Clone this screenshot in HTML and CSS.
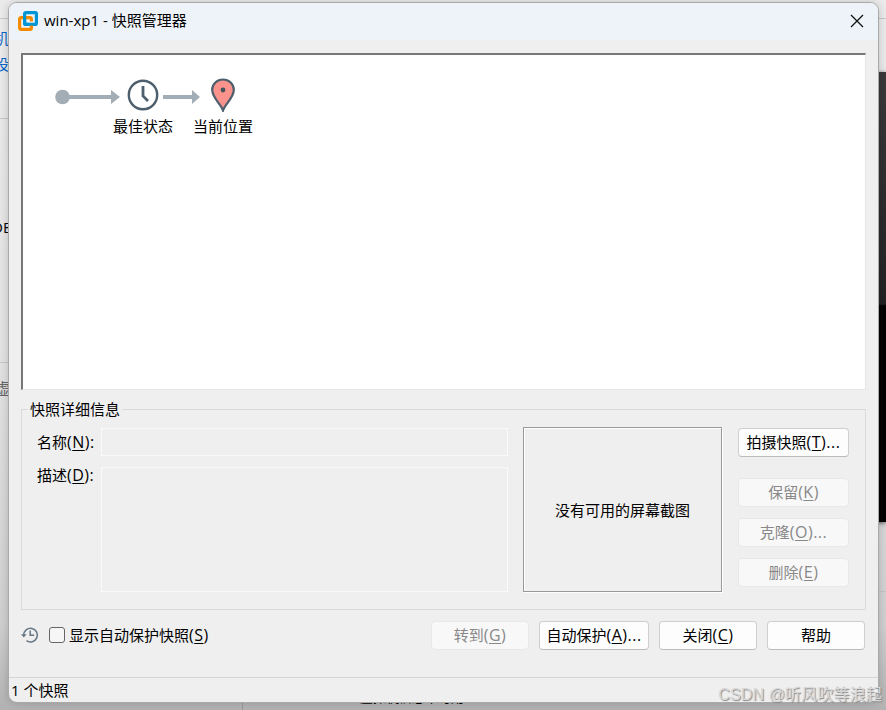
FILE: index.html
```html
<!DOCTYPE html>
<html lang="zh-CN">
<head>
<meta charset="utf-8">
<title>快照管理器</title>
<link rel="stylesheet" href="styles.css">
</head>
<body>
<div class="backdrop">
  <span class="rule r1"></span><span class="rule r2"></span><span class="rule r3"></span><span class="rule r4"></span><span class="rule r5"></span>
  <span class="behind link b1">机</span>
  <span class="behind link b2">设</span>
  <span class="behind b3">DE</span>
  <span class="behind faded b4">虚</span>
  <span class="behind b5">虚拟机信息不可用</span>
  <span class="screen"></span>
</div>
<main class="window">
  <header class="titlebar">
    <svg class="logo" width="20" height="20" viewBox="0 0 20 20" fill="none" stroke-width="3.2">
      <rect x="6.6" y="1.6" width="11.8" height="11.8" rx="1.2" stroke="#0095d5"/>
      <path d="M6 6.6H3a1.4 1.4 0 0 0-1.4 1.4v9A1.4 1.4 0 0 0 3 18.4h9a1.4 1.4 0 0 0 1.4-1.4v-2.6" stroke="#f68b00"/>
      <path d="M5 6.6h7a1.4 1.4 0 0 1 1.4 1.4v2.4" stroke="#f68b00"/>
      <path d="M6.6 5v7a1.4 1.4 0 0 0 1.4 1.4h3" stroke="#0095d5"/>
    </svg>
    <h1>win-xp1 - 快照管理器</h1>
    <svg class="close" width="14" height="14" viewBox="0 0 14 14"><path d="M1 1l12 12M13 1L1 13" stroke="#111" stroke-width="1.3" fill="none"/></svg>
  </header>
  <section class="canvas">
    <svg class="start" width="66" height="16" viewBox="0 0 66 16" fill="#a3adb5"><circle cx="7.5" cy="8" r="7.3"/><path d="M13 6h43V1l9 7-9 7v-5H13z"/></svg>
    <div class="node n1">
      <svg width="32" height="34" viewBox="0 0 32 34" fill="none" stroke="#4d5f6c"><circle cx="16" cy="17" r="14.2" stroke-width="2.4"/><path d="M16 8v10l5 5" stroke-width="2.8"/></svg>
      <span>最佳状态</span>
    </div>
    <svg class="step" width="38" height="16" viewBox="0 0 38 16" fill="#a3adb5"><path d="M0 6h29V1l8 7-8 7v-5H0z"/></svg>
    <div class="node n2">
      <svg width="32" height="34" viewBox="0 0 32 34"><path d="M16 32.5C14 26 5.2 20 5.2 11.8a10.8 10.3 0 0 1 21.6 0C26.8 20 18 26 16 32.5z" fill="#fb938d" stroke="#4d5f6c" stroke-width="2.2"/><circle cx="16" cy="12" r="2.4" fill="#45515b"/></svg>
      <span>当前位置</span>
    </div>
  </section>
  <fieldset class="details">
    <legend>快照详细信息</legend>
    <div class="fields">
      <label>名称<span class="key">(<u>N</u>):</span></label><div class="field"></div>
      <label>描述<span class="key">(<u>D</u>):</span></label><div class="field"></div>
    </div>
    <div class="preview">没有可用的屏幕截图</div>
    <div class="actions">
      <button class="first">拍摄快照<span class="key">(<u>T</u>)...</span></button>
      <button disabled>保留<span class="key">(<u>K</u>)</span></button>
      <button disabled>克隆<span class="key">(<u>O</u>)...</span></button>
      <button disabled>删除<span class="key">(<u>E</u>)</span></button>
    </div>
  </fieldset>
  <div class="footer">
    <svg class="history" width="18" height="18" viewBox="0 0 18 18" fill="none" stroke="#647684" stroke-width="1.5"><path d="M2.7 9.2A6.8 6.8 0 1 1 5.5 14.6"/><path d="M9.2 4.5v4.8h4"/><path d="M0 8.2h5.6L2.8 11.5z" fill="#647684" stroke="none"/></svg>
    <span class="check"></span>
    <span class="check-label">显示自动保护快照<span class="key">(<u>S</u>)</span></span>
    <div class="commands">
      <button disabled>转到<span class="key">(<u>G</u>)</span></button>
      <button class="wide">自动保护<span class="key">(<u>A</u>)...</span></button>
      <button>关闭<span class="key">(<u>C</u>)</span></button>
      <button>帮助</button>
    </div>
  </div>
  <footer class="status">1 个快照</footer>
</main>
<div class="watermark">CSDN @听风吹等浪起</div>
</body>
</html>
```
FILE: styles.css
```css
* { box-sizing: border-box; }
body {
  margin: 0; width: 886px; height: 710px; overflow: hidden; position: relative;
  padding: 2px 0 0 8px;
  background: linear-gradient(#ebebeb, #e2e2e2 50%, #cfcfcf 88%, #b2b2b2);
  font: 15px/20px "Open Sans", "Noto Sans CJK SC", sans-serif; color: #000;
}
.backdrop { position: absolute; inset: 0; overflow: hidden; }
.rule { position: absolute; background: #c6c6c6; height: 1px; left: 0; width: 100%; }
.r1 { top: 18px; }
.r2 { top: 118px; width: 9px; }
.r3 { top: 362px; width: 9px; }
.r4 { top: 591px; left: 878px; }
.r5 { left: 242px; top: 702px; width: 1px; height: 8px; background: #999; }
.behind { position: absolute; white-space: nowrap; }
.link { color: #0a66c8; }
.b1 { left: -6px; top: 28px; }
.b2 { left: -6px; top: 54px; }
.b3 { left: -8px; top: 217px; }
.b4 { left: -5px; top: 378px; }
.b5 { left: 360px; top: 687px; font-size: 13px; }
.faded { color: #666; }
.screen {
  position: absolute; left: 876px; top: 72px; width: 10px; height: 450px;
  background: linear-gradient(#3a3a3a, #222 232px, #000 234px); box-shadow: 0 1px 4px #555;
}
.window {
  position: relative; width: 871px; height: 701px; display: flex; flex-direction: column;
  border: 1px solid #a9a9a9; border-radius: 9px; background: #efefef; overflow: hidden;
  box-shadow: 0 0 8px rgba(0, 0, 0, .18);
}
.titlebar { height: 37px; flex: none; display: flex; align-items: center; padding: 0 14px 2px 9px; background: #eef3f9; }
.titlebar h1 { margin: -2px auto 0 6px; font-size: 15px; font-weight: 400; }
.canvas {
  position: relative; flex: none; height: 337px; margin: 13px 12px 0; background: #fff;
  border: 2px solid; border-color: #777 #e5e5e5 #e5e5e5 #777;
  border-right-width: 1px; border-bottom-width: 1px;
}
.canvas svg { display: block; }
.start { position: absolute; left: 32px; top: 34px; }
.step { position: absolute; left: 140px; top: 34px; }
.node { position: absolute; width: 80px; display: flex; flex-direction: column; align-items: center; white-space: nowrap; }
.n1 { left: 80px; top: 23px; }
.n2 { left: 160px; top: 23px; }
.node span { margin-top: 4px; }
.details {
  position: relative; flex: none; height: 212px; margin: 8px 12px 0; padding: 8px 16px 0 15px; min-width: 0;
  border: 1px solid #dadada; display: flex;
}
.details legend { margin-left: -9px; padding: 1px 2px 0; height: 22px; }
.fields {
  width: 471px; display: grid; grid-template-columns: 64px 407px;
  grid-template-rows: 28px 125px; row-gap: 11px; height: 164px;
}
.fields label { padding-top: 4px; }
.fields label:nth-of-type(2) { padding-top: 0; margin-top: -2px; }
.field { border: 1px solid #fafafa; }
.key { font-size: 16px; line-height: 16px; letter-spacing: .5px; }
.preview {
  width: 199px; height: 165px; margin: -1px 16px 0 15px; border: 1px solid #999;
  box-shadow: inset 1px 1px #fff, 1px 1px #fff; display: flex; align-items: center; justify-content: center;
}
.actions { display: flex; flex-direction: column; gap: 11px; }
.actions button { width: 111px; }
.actions .first { margin-bottom: 10px; }
button {
  height: 29px; width: 98px; padding: 0 0 2px; border: 1px solid #cfcfcf; border-bottom-color: #bbb; border-radius: 4px;
  background: #fdfdfd; color: #000; font: inherit; white-space: nowrap; line-height: 20px;
}
button:disabled { background: #f8f8f8; border-color: #e8e8e8; color: #888; }
u { text-decoration-thickness: 1px; text-underline-offset: 2px; }
.footer { display: flex; align-items: center; height: 29px; flex: none; margin: 11px 13px 0 12px; }
.history { margin: -2px 0 0; }
.check { width: 16px; height: 16px; margin: -2px 4px 0 10px; border: 1px solid #666; border-radius: 3px; background: #f6f6f6; }
.check-label { margin-top: -2px; }
.commands { display: flex; gap: 10px; margin-left: auto; }
.commands .wide { width: 110px; }
.status { margin-top: 27px; height: 25px; flex: none; border-top: 1px solid #d5d5d5; padding: 2px 0 0 2px; }
.watermark {
  position: absolute; right: 4px; top: 684px; white-space: nowrap;
  font: 16px/22px "Liberation Sans", "Noto Sans CJK SC", sans-serif; letter-spacing: .15px; color: #d9d9d9;
  text-shadow: 1px 1px 1px #888;
}
```
